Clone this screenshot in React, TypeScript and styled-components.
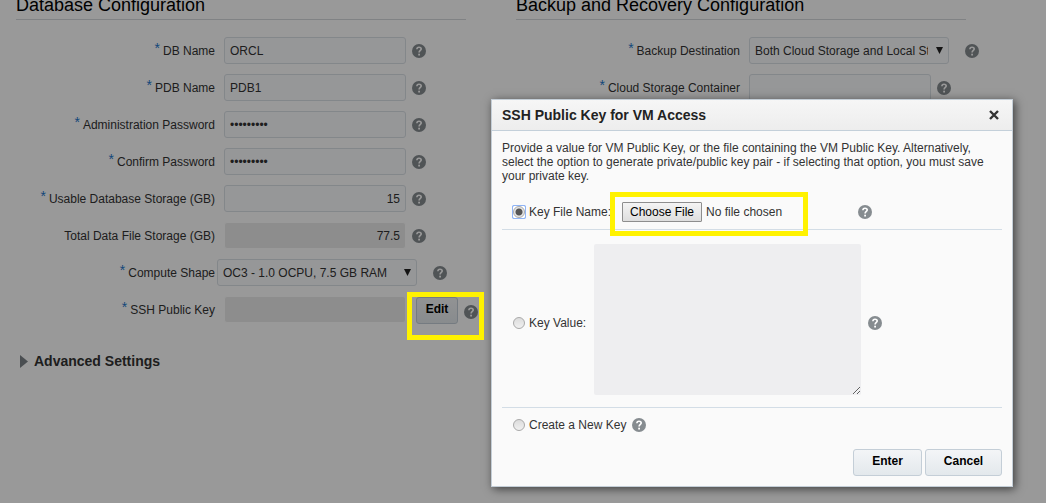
import React, { useState } from "react";
import styled, { createGlobalStyle, css } from "styled-components";

const GlobalStyle = createGlobalStyle`
  *, *::before, *::after { box-sizing: border-box; }
  body {
    margin: 0;
    background: #fff;
    color: #333;
    font: 12px/14px "Liberation Sans", Arial, sans-serif;
  }
  input, select, textarea, button { font: inherit; color: inherit; margin: 0; }
`;

const Page = styled.div`
  position: relative;
  min-height: 100vh;
  overflow: hidden;
`;

const Columns = styled.main`
  display: grid;
  grid-template-columns: repeat(2, minmax(0, 1fr));
  gap: 50px;
  padding: 0 80px 0 16px;
`;

const Heading = styled.h2`
  margin: 0 0 17px;
  padding-bottom: 9px;
  border-bottom: 1px solid #d6d9dc;
  color: #000;
  font-size: 18px;
  font-weight: 400;
  line-height: 10px;
  white-space: nowrap;
`;

const Fields = styled.div`
  display: flex;
  flex-direction: column;
  gap: 10px;
`;

const Row = styled.div`
  display: flex;
  align-items: center;
  height: 27px;
`;

const FieldLabel = styled.label<{ $width: number; $tight?: boolean }>`
  flex: none;
  width: ${(p) => p.$width}px;
  margin-right: ${(p) => (p.$tight ? 2 : 9)}px;
  text-align: right;
  white-space: nowrap;
`;

const Star = styled.span`
  position: relative;
  top: -2px;
  margin-right: 3px;
  color: #1f78cc;
  font-size: 14px;
  line-height: 1;
`;

const control = css`
  height: 27px;
  border: 1px solid #dbe1e6;
  border-radius: 3px;
  background: #fbfcfe;
  padding: 0 5px;
  outline: none;
`;

const TextBox = styled.input<{ $numeric?: boolean }>`
  ${control}
  flex: none;
  width: 182px;
  text-align: ${(p) => (p.$numeric ? "right" : "left")};
  &:read-only {
    border-color: #fff;
    background: #ececec;
  }
`;

const SelectWrap = styled.span`
  position: relative;
  display: flex;
  flex: none;
  width: 200px;
  margin-right: 10px;
  svg {
    position: absolute;
    top: 10px;
    right: 6px;
    pointer-events: none;
  }
`;

const SelectBox = styled.select`
  ${control}
  width: 100%;
  padding-right: 20px;
  appearance: none;
`;

const HelpButton = styled.button`
  display: flex;
  flex: none;
  margin-left: 6px;
  padding: 0;
  border: 0;
  background: none;
`;

const PushButton = styled.button<{ $width: number }>`
  width: ${(p) => p.$width}px;
  height: 27px;
  padding: 0 0 3px;
  border: 1px solid #c4ced7;
  border-radius: 3px;
  background: linear-gradient(#f3f5f7, #e3e8ec);
  color: #000;
  font-weight: 700;
`;

const EditGroup = styled.span`
  position: relative;
  display: flex;
  align-items: center;
  margin: 2px 0 0 10px;
  ${HelpButton} { margin-top: 2px; }
`;

const Highlight = styled.span`
  position: absolute;
  z-index: 3;
  border: 5px solid #fff200;
  pointer-events: none;
`;

const EditHighlight = styled(Highlight)`
  inset: -5px -6px -16px -9px;
`;

const FileHighlight = styled(Highlight)`
  inset: -10px 44px -14px -12px;
`;

const Disclosure = styled.button`
  display: flex;
  align-items: center;
  gap: 6px;
  margin: 28px 0 0 20px;
  padding: 0;
  border: 0;
  background: none;
  font-size: 14px;
  font-weight: 700;
  line-height: 20px;
`;

const Backdrop = styled.div`
  position: absolute;
  inset: 0;
  z-index: 1;
  background: rgba(0, 0, 0, 0.4);
`;

const Dialog = styled.section`
  position: absolute;
  z-index: 2;
  top: 99px;
  right: 33px;
  width: 522px;
  border: 1px solid #c4ced7;
  background: #fafafa;
  box-shadow: 2px 2px 9px rgba(0, 0, 0, 0.6);
`;

const DialogHeader = styled.header`
  display: flex;
  align-items: center;
  justify-content: space-between;
  height: 31px;
  padding: 0 13px 0 10px;
  border-bottom: 1px solid #c4d0da;
  background: linear-gradient(#f6f6f6, #ededed);
`;

const DialogTitle = styled.h3`
  margin: 0;
  color: #222;
  font-size: 14px;
  line-height: 20px;
`;

const CloseButton = styled.button`
  display: flex;
  padding: 0;
  border: 0;
  background: none;
`;

const DialogBody = styled.div`
  padding: 10px;
`;

const Intro = styled.p`
  margin: 0 0 12px;
`;

const Option = styled.div<{ $divided?: boolean }>`
  display: flex;
  align-items: center;
  min-height: 34px;
  padding-left: 11px;
  ${(p) => p.$divided && "border-bottom: 1px solid #d3dde6; min-height: 35px;"}
`;

const ValueOption = styled(Option)`
  padding-top: 14px;
  padding-bottom: 12px;
  label, button { margin-top: 6px; }
`;

const RadioLabel = styled.label`
  display: flex;
  align-items: center;
  gap: 4px;
  white-space: nowrap;
`;

const Radio = styled.input`
  appearance: none;
  width: 12px;
  height: 12px;
  border: 1px solid #a9a9a9;
  border-radius: 50%;
  background: linear-gradient(#dcdcdc, #f0f0f0);
  &:checked {
    background: radial-gradient(circle, #555 0 3px, #e6e6e6 4px);
  }
`;

const RadioFrame = styled.span`
  display: flex;
  border-radius: 1px;
  &:has(input:checked) {
    background: #fff;
    box-shadow: 0 0 0 1px #a4c3f8;
    outline: 1px solid #8fb4f5;
  }
`;

const FileGroup = styled.span`
  position: relative;
  display: flex;
  flex: none;
  width: 230px;
  margin-left: 11px;
`;

const FileInput = styled.input`
  width: 100%;
  height: 20px;
  line-height: 18px;
  &::file-selector-button {
    width: 80px;
    height: 20px;
    margin: 0 4px 0 0;
    padding: 0 0 1px;
    border: 1px solid #8e8e8e;
    border-radius: 1px;
    background: linear-gradient(#f4f4f4, #dedede);
    color: #000;
    font: inherit;
  }
`;

const KeyValue = styled.textarea`
  width: 267px;
  height: 151px;
  margin: 0 1px 0 8px;
  border: 0;
  border-radius: 2px;
  background: #eeeef0;
`;

const DialogFooter = styled.footer`
  display: flex;
  justify-content: flex-end;
  gap: 3px;
  padding-top: 7px;
`;

function Help() {
  return (
    <HelpButton type="button" aria-label="Help">
      <svg width="14" height="14" viewBox="0 0 14 14">
        <circle cx="7" cy="7" r="7" fill="#868c90" />
        <path d="M4.9 5.300C4.900 3.900 5.800 3.200 7 3.200s2.200.7 2.200 1.800C9.200 6.300 7.100 6.500 7.100 8.500" fill="none" stroke="#fff" strokeWidth="1.6" />
        <rect x="6.200" y="9.700" width="1.800" height="1.800" fill="#fff" />
      </svg>
    </HelpButton>
  );
}

interface FieldProps {
  id: string;
  label: string;
  labelWidth?: number;
  optional?: boolean;
  tight?: boolean;
  help?: boolean;
  children: React.ReactNode;
}

function Field({ id, label, labelWidth = 199, optional, tight, help = true, children }: FieldProps) {
  return (
    <Row>
      <FieldLabel htmlFor={id} $width={labelWidth} $tight={tight}>
        {!optional && <Star>*</Star>}
        {label}
      </FieldLabel>
      {children}
      {help && <Help />}
    </Row>
  );
}

function Select({ id, option }: { id: string; option: string }) {
  return (
    <SelectWrap>
      <SelectBox id={id}>
        <option>{option}</option>
      </SelectBox>
      <svg width="7" height="7" viewBox="0 0 7 7">
        <path d="M0 0h7L3.500 7z" fill="#222" />
      </svg>
    </SelectWrap>
  );
}

export default function App() {
  const [source, setSource] = useState("file");
  const radio = (value: string) => (
    <RadioFrame>
      <Radio type="radio" name="source" checked={source === value} onChange={() => setSource(value)} />
    </RadioFrame>
  );

  return (
    <Page>
      <GlobalStyle />
      <Columns>
        <section>
          <Heading>Database Configuration</Heading>
          <Fields>
            <Field id="db" label="DB Name">
              <TextBox id="db" defaultValue="ORCL" />
            </Field>
            <Field id="pdb" label="PDB Name">
              <TextBox id="pdb" defaultValue="PDB1" />
            </Field>
            <Field id="password" label="Administration Password">
              <TextBox id="password" type="password" defaultValue="welcome12" />
            </Field>
            <Field id="confirm" label="Confirm Password">
              <TextBox id="confirm" type="password" defaultValue="welcome12" />
            </Field>
            <Field id="usable" label="Usable Database Storage (GB)">
              <TextBox id="usable" $numeric defaultValue="15" />
            </Field>
            <Field id="total" label="Total Data File Storage (GB)" optional>
              <TextBox id="total" $numeric readOnly value="77.5" />
            </Field>
            <Field id="shape" label="Compute Shape" tight>
              <Select id="shape" option="OC3 - 1.0 OCPU, 7.5 GB RAM" />
            </Field>
            <Field id="ssh" label="SSH Public Key" help={false}>
              <TextBox id="ssh" readOnly value="" />
              <EditGroup>
                <PushButton type="button" $width={42}>Edit</PushButton>
                <Help />
                <EditHighlight />
              </EditGroup>
            </Field>
          </Fields>
        </section>
        <section>
          <Heading>Backup and Recovery Configuration</Heading>
          <Fields>
            <Field id="backup" label="Backup Destination" labelWidth={224}>
              <Select id="backup" option="Both Cloud Storage and Local Storage" />
            </Field>
            <Field id="container" label="Cloud Storage Container" labelWidth={224}>
              <TextBox id="container" />
            </Field>
          </Fields>
        </section>
      </Columns>
      <Disclosure type="button" aria-expanded="false">
        <svg width="8" height="13" viewBox="0 0 8 13">
          <path d="M0 0l8 6.500-8 6.500z" fill="#7c8287" />
        </svg>
        Advanced Settings
      </Disclosure>

      <Backdrop />
      <Dialog role="dialog" aria-labelledby="dialog-title">
        <DialogHeader>
          <DialogTitle id="dialog-title">SSH Public Key for VM Access</DialogTitle>
          <CloseButton type="button" aria-label="Close">
            <svg width="10" height="10" viewBox="0 0 10 10">
              <path d="M1 1l8 8M9 1L1 9" stroke="#333" strokeWidth="2.400" />
            </svg>
          </CloseButton>
        </DialogHeader>
        <DialogBody>
          <Intro>
            Provide a value for VM Public Key, or the file containing the VM Public Key. Alternatively, select the
            option to generate private/public key pair - if selecting that option, you must save your private key.
          </Intro>
          <Option $divided>
            <RadioLabel>
              {radio("file")}
              Key File Name:
            </RadioLabel>
            <FileGroup>
              <FileInput type="file" aria-label="Key file" />
              <FileHighlight />
            </FileGroup>
            <Help />
          </Option>
          <ValueOption $divided>
            <RadioLabel>
              {radio("value")}
              Key Value:
            </RadioLabel>
            <KeyValue aria-label="Key value" />
            <Help />
          </ValueOption>
          <Option>
            <RadioLabel>
              {radio("new")}
              Create a New Key
            </RadioLabel>
            <Help />
          </Option>
          <DialogFooter>
            <PushButton type="button" $width={69}>Enter</PushButton>
            <PushButton type="button" $width={77}>Cancel</PushButton>
          </DialogFooter>
        </DialogBody>
      </Dialog>
    </Page>
  );
}
